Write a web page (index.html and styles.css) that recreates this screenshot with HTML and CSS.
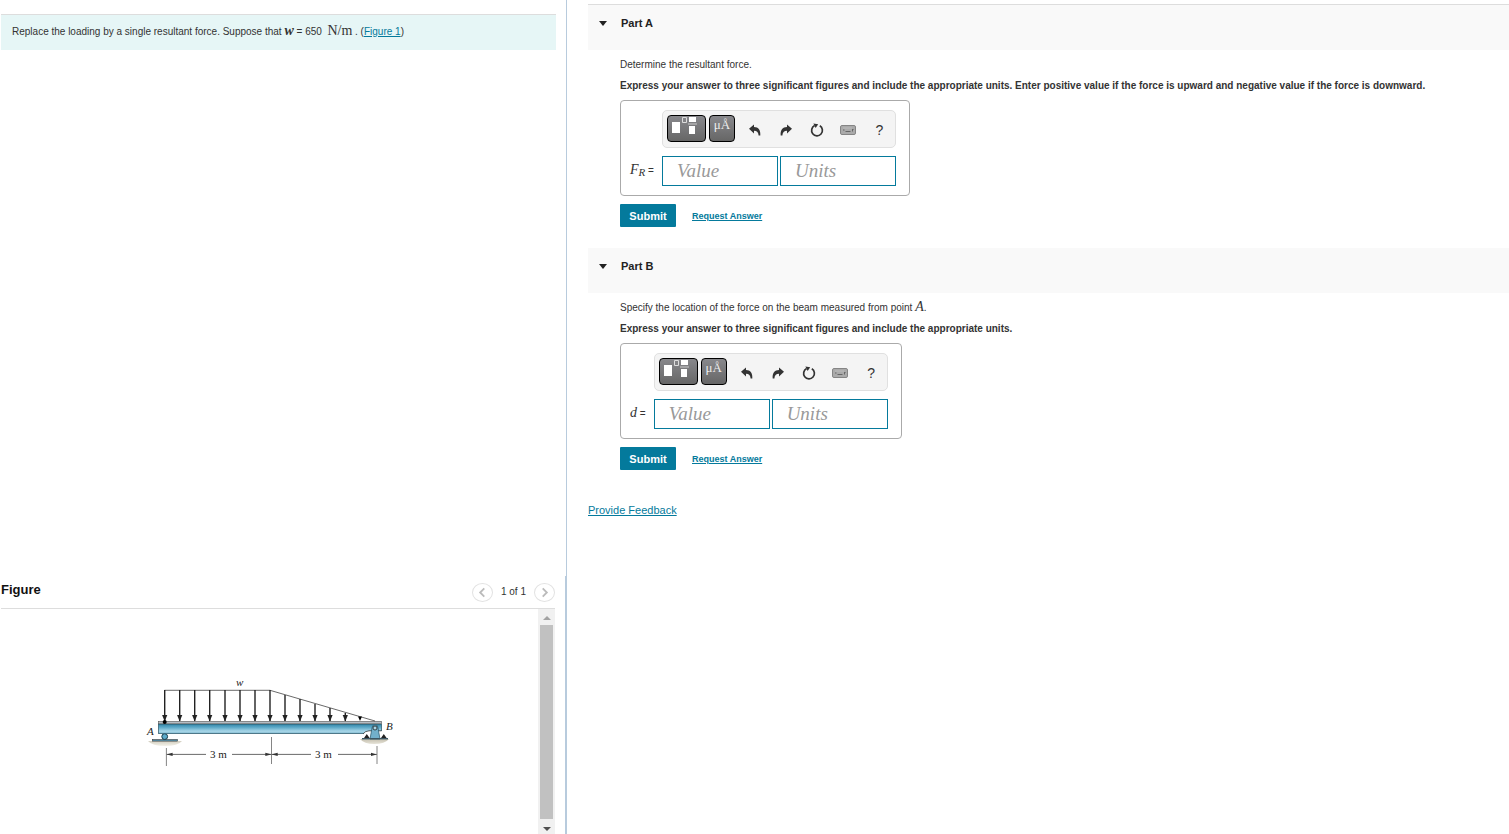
FILE: index.html
```html
<!DOCTYPE html>
<html lang="en">
<head>
    <meta charset="UTF-8">
    <meta name="viewport" content="width=device-width, initial-scale=1.0">
    <title>Resultant Force</title>
    <link rel="stylesheet" href="styles.css">
</head>
<body>
    <!-- shared toolbar icons -->
    <svg class="sprite" aria-hidden="true">
        <symbol id="icon-undo" viewBox="0 0 12 12">
            <path d="M0 4.8 L5 0.4 V3 C9.5 3 11.8 6 11.3 11.6 H9.6 C9.5 8.4 8 6.8 5 6.8 V9.4 Z"/>
        </symbol>
        <symbol id="icon-redo" viewBox="0 0 12 12">
            <path d="M12 4.8 L7 0.4 V3 C2.5 3 0.2 6 0.7 11.6 H2.4 C2.5 8.4 4 6.8 7 6.8 V9.4 Z"/>
        </symbol>
        <symbol id="icon-reset" viewBox="0 0 14 14">
            <path d="M9.8 2.8 A5.4 5.4 0 1 1 4.6 2.6" fill="none" stroke="#333" stroke-width="1.7"/>
            <path d="M3.4 0.4 L8.2 1.2 L5.6 5 Z"/>
        </symbol>
        <symbol id="icon-keyboard" viewBox="0 0 16 10">
            <rect x="0.5" y="0.5" width="15" height="9" rx="1.5" fill="#aaa" stroke="#858585"/>
            <path d="M3 5 H4.5 M5.5 6.5 H10.5 M12 4.5 H13.5 M12.5 4 V6.5" fill="none" stroke="#666"/>
            <path d="M3 3 H12" stroke="#bbb"/>
        </symbol>
        <symbol id="icon-template" viewBox="0 0 36 24">
            <path d="M4 5 H12 V16 H4 Z M21 0 H28 V5 H21 Z M21 9 H27 V17 H21 Z" fill="#fff"/>
            <path d="M20 7 H29" stroke="#ccc" stroke-width="1"/>
            <path d="M14.5 0.5 H18.5 V5.5 H14.5 Z" fill="none" stroke="#ddd"/>
        </symbol>
    </svg>

    <div class="page">
        <aside class="left">
            <div class="problem">
                Replace the loading by a single resultant force. Suppose that <i class="math bold">w</i> = 650 &nbsp;<span class="math">N/m</span> . (<a href="#figure">Figure 1</a>)
            </div>

            <section class="figure" id="figure">
                <div class="figure-header">
                    <h2>Figure</h2>
                    <div class="pager">
                        <button type="button" aria-label="Previous figure"><svg viewBox="0 0 8 12"><path d="M6.5 1.5 L2 6 L6.5 10.5"/></svg></button>
                        <span>1 of 1</span>
                        <button type="button" aria-label="Next figure"><svg viewBox="0 0 8 12"><path d="M1.5 1.5 L6 6 L1.5 10.5"/></svg></button>
                    </div>
                </div>
                <div class="viewer">
                    <div class="drawing">
                        <svg class="beam" viewBox="0 0 260 105" role="img" aria-label="Beam AB with distributed load w">
                            <defs>
                                <linearGradient id="steel" x1="0" y1="0" x2="0" y2="1">
                                    <stop offset="0" stop-color="#2f84a8"/>
                                    <stop offset="0.35" stop-color="#5da9c8"/>
                                    <stop offset="0.75" stop-color="#a9d7e8"/>
                                    <stop offset="1" stop-color="#7fb9d0"/>
                                </linearGradient>
                                <linearGradient id="ground" x1="0" y1="0" x2="0" y2="1">
                                    <stop offset="0" stop-color="#c4bfae"/>
                                    <stop offset="1" stop-color="#f4f2ea"/>
                                </linearGradient>
                                <marker id="load" viewBox="0 0 6 7" refX="3" refY="6.5" markerWidth="6" markerHeight="7" markerUnits="userSpaceOnUse">
                                    <path d="M0.4 0.5 H5.6 L3 7 Z" fill="#222"/>
                                </marker>
                                <marker id="dim" viewBox="0 0 6 4" refX="6" refY="2" markerWidth="6" markerHeight="4" markerUnits="userSpaceOnUse" orient="auto">
                                    <path d="M0 0.4 L6 2 L0 3.6 Z" fill="#333"/>
                                </marker>
                            </defs>
                            <path d="M8 71 H42 Q38 76 25 76 Q12 76 8 71 Z M220 69 H249 Q245 74 234 74 Q224 74 220 69 Z" fill="url(#ground)"/>
                            <rect x="12.5" y="69.5" width="25" height="1.6" fill="#5a93ad" stroke="#222" stroke-width="0.5"/>
                            <circle cx="24.7" cy="66.6" r="2.9" fill="#5da9c8" stroke="#173845"/>
                            <rect x="18.5" y="54" width="223" height="9.6" fill="url(#steel)" stroke="#245063" stroke-width="0.7"/>
                            <rect x="18.5" y="51.4" width="223" height="2.4" fill="#b5bdc4" stroke="#555" stroke-width="0.6"/>
                            <path d="M223 64.2 Q225 61 229 61 H242 V64.2 Z" fill="#fff"/>
                            <path d="M223 64 Q225 61 229 60.8 H241.5" fill="none" stroke="#222" stroke-width="0.7"/>
                            <path d="M230 69 L232 58 Q232 54.8 235 54.8 Q238 54.8 238 58 L240 69 Z" fill="#72b0cb" stroke="#245063" stroke-width="0.7"/>
                            <circle cx="235" cy="58" r="2" fill="#a9d7e8" stroke="#222" stroke-width="0.8"/>
                            <path d="M222 68.7 H248" stroke="#3c5663" stroke-width="1.4"/>
                            <path d="M224 68 L226.8 64 L229.6 68 Z M241 68 L243.8 64 L246.6 68 Z" fill="#222"/>
                            <path d="M24.5 20.3 H130 L235 51" fill="none" stroke="#444" stroke-width="0.8"/>
                            <g stroke="#222" stroke-width="1.4">
                                <path d="M24.7 20 V51" marker-end="url(#load)"/>
                                <path d="M39.7 20 V51" marker-end="url(#load)"/>
                                <path d="M54.7 20 V51" marker-end="url(#load)"/>
                                <path d="M69.7 20 V51" marker-end="url(#load)"/>
                                <path d="M85 20 V51" marker-end="url(#load)"/>
                                <path d="M100 20 V51" marker-end="url(#load)"/>
                                <path d="M115 20 V51" marker-end="url(#load)"/>
                                <path d="M130 20 V51" marker-end="url(#load)"/>
                                <path d="M145 25 V51" marker-end="url(#load)"/>
                                <path d="M160 29 V51" marker-end="url(#load)"/>
                                <path d="M175 34 V51" marker-end="url(#load)"/>
                                <path d="M190 38 V51" marker-end="url(#load)"/>
                                <path d="M205.3 43 V51" marker-end="url(#load)"/>
                            </g>
                            <path d="M218 46.5 H222 L220 51 Z"/>
                            <circle cx="24.7" cy="52" r="2"/>
                            <path d="M26.4 78 V96 M131.5 67 V94 M237 76 V94" stroke="#666" stroke-width="0.8"/>
                            <g stroke="#444" stroke-width="0.8">
                                <path d="M66 84.4 H26.6" marker-end="url(#dim)"/>
                                <path d="M92 84.4 H131.3" marker-end="url(#dim)"/>
                                <path d="M171 84.4 H131.7" marker-end="url(#dim)"/>
                                <path d="M198 84.4 H236.8" marker-end="url(#dim)"/>
                            </g>
                            <g class="labels">
                                <text class="italic" x="96" y="16">w</text>
                                <text class="italic" x="7" y="65">A</text>
                                <text class="italic" x="246" y="60">B</text>
                                <text x="70" y="88">3 m</text>
                                <text x="175" y="88">3 m</text>
                            </g>
                        </svg>
                    </div>
                    <div class="scrollbar">
                        <span class="arrow up"></span>
                        <span class="thumb"></span>
                        <span class="arrow down"></span>
                    </div>
                </div>
            </section>
        </aside>

        <main class="right">
            <section class="part">
                <header class="part-header">
                    <span class="caret"></span>
                    <h2>Part A</h2>
                </header>
                <form class="part-body">
                    <p>Determine the resultant force.</p>
                    <p class="bold">Express your answer to three significant figures and include the appropriate units. Enter positive value if the force is upward and negative value if the force is downward.</p>
                    <div class="answer">
                        <div class="toolbar">
                            <button type="button" class="dark wide" aria-label="Templates"><svg><use href="#icon-template"/></svg></button>
                            <button type="button" class="dark">μÅ</button>
                            <button type="button" class="tool" aria-label="Undo"><svg class="arrow-icon"><use href="#icon-undo"/></svg></button>
                            <button type="button" class="tool" aria-label="Redo"><svg class="arrow-icon"><use href="#icon-redo"/></svg></button>
                            <button type="button" class="tool" aria-label="Reset"><svg class="reset-icon"><use href="#icon-reset"/></svg></button>
                            <button type="button" class="tool" aria-label="Keyboard shortcuts"><svg class="keyboard-icon"><use href="#icon-keyboard"/></svg></button>
                            <button type="button" class="tool">?</button>
                        </div>
                        <label for="forceValue"><i class="math">F<sub>R</sub></i> =</label>
                        <div class="fields">
                            <input type="text" id="forceValue" placeholder="Value">
                            <input type="text" id="forceUnits" placeholder="Units" aria-label="Force units">
                        </div>
                    </div>
                    <div class="actions">
                        <button type="submit" class="submit">Submit</button>
                        <a href="#">Request Answer</a>
                    </div>
                </form>
            </section>

            <section class="part">
                <header class="part-header">
                    <span class="caret"></span>
                    <h2>Part B</h2>
                </header>
                <form class="part-body">
                    <p>Specify the location of the force on the beam measured from point <i class="math">A</i>.</p>
                    <p class="bold">Express your answer to three significant figures and include the appropriate units.</p>
                    <div class="answer">
                        <div class="toolbar">
                            <button type="button" class="dark wide" aria-label="Templates"><svg><use href="#icon-template"/></svg></button>
                            <button type="button" class="dark">μÅ</button>
                            <button type="button" class="tool" aria-label="Undo"><svg class="arrow-icon"><use href="#icon-undo"/></svg></button>
                            <button type="button" class="tool" aria-label="Redo"><svg class="arrow-icon"><use href="#icon-redo"/></svg></button>
                            <button type="button" class="tool" aria-label="Reset"><svg class="reset-icon"><use href="#icon-reset"/></svg></button>
                            <button type="button" class="tool" aria-label="Keyboard shortcuts"><svg class="keyboard-icon"><use href="#icon-keyboard"/></svg></button>
                            <button type="button" class="tool">?</button>
                        </div>
                        <label for="distanceValue"><i class="math">d</i> =</label>
                        <div class="fields">
                            <input type="text" id="distanceValue" placeholder="Value">
                            <input type="text" id="distanceUnits" placeholder="Units" aria-label="Distance units">
                        </div>
                    </div>
                    <div class="actions">
                        <button type="submit" class="submit">Submit</button>
                        <a href="#">Request Answer</a>
                    </div>
                </form>
            </section>

            <a class="feedback" href="#">Provide Feedback</a>
        </main>
    </div>
</body>
</html>
```
FILE: styles.css
```css
* {
    box-sizing: border-box;
}
body {
    margin: 0;
    font-family: "Liberation Sans", Arial, sans-serif;
    font-size: 10px;
    line-height: 16px;
    color: #333;
    background-color: white;
}
h2, p {
    margin: 0;
}
a {
    color: #047a9c;
    text-underline-offset: 1px;
}
button {
    padding: 0;
    font-family: inherit;
    cursor: pointer;
}
.sprite {
    position: absolute;
    width: 0;
    height: 0;
}
.bold {
    font-weight: bold;
}
.math {
    font-family: "Liberation Serif", "Times New Roman", serif;
    font-size: 14px;
    line-height: 1;
}
.page {
    display: grid;
    grid-template-columns: 567fr 942fr;
    min-height: 100vh;
}

/* left column */
.left {
    display: flex;
    flex-direction: column;
    justify-content: space-between;
    padding: 14px 0 0 1px;
    border-right: 1px solid #b8cbdd;
}
.problem {
    margin-right: 10px;
    padding: 9px 11px 10px;
    border-top: 1px solid #ddd;
    background-color: #e6f6f6;
}
.figure {
    padding-right: 10px;
    border-right: 1px solid #b8cbdd;
}
.figure-header {
    display: flex;
    justify-content: space-between;
    align-items: center;
    height: 33px;
    border-bottom: 1px solid #ddd;
}
.figure-header h2 {
    padding-bottom: 4px;
    font-size: 13px;
    color: #111;
}
.pager {
    display: flex;
    align-items: center;
    gap: 8px;
}
.pager button {
    display: flex;
    align-items: center;
    justify-content: center;
    width: 21px;
    height: 19px;
    border: 1px solid #e2e2e2;
    border-radius: 50%;
    background-color: white;
}
.pager svg {
    width: 8px;
    height: 11px;
    fill: none;
    stroke: #bbb;
    stroke-width: 2;
}
.viewer {
    display: flex;
    height: 225px;
}
.drawing {
    flex: 1;
    padding-top: 61px;
    text-align: center;
}
.beam {
    width: 260px;
    height: 105px;
}
.labels {
    font-family: "Liberation Serif", "Times New Roman", serif;
    font-size: 11px;
    fill: #222;
}
.italic {
    font-style: italic;
}
.scrollbar {
    display: flex;
    flex-direction: column;
    align-items: center;
    gap: 5px;
    width: 17px;
    padding: 7px 0 3px;
    background-color: #f1f1f1;
}
.thumb {
    flex: 1;
    width: 13px;
    margin-bottom: 3px;
    background-color: #c1c1c1;
}
.arrow {
    border: 4px solid transparent;
}
.up {
    border-top: 0;
    border-bottom-color: #a3a3a3;
}
.down {
    border-bottom: 0;
    border-top-color: #505050;
}

/* right column */
.right {
    padding: 4px 0 0 21px;
}
.part-header {
    display: flex;
    align-items: center;
    gap: 14px;
    height: 45px;
    padding: 0 0 9px 11px;
    background-color: #f9f9f9;
}
.part:first-child .part-header {
    height: 46px;
    border-top: 1px solid #ddd;
}
.part-header h2 {
    font-size: 11px;
    color: #222;
}
.caret {
    border: 4px solid transparent;
    border-top: 5px solid #222;
    border-bottom: 0;
}
.part-body {
    padding: 7px 0 21px 32px;
}
.part-body p {
    margin-bottom: 5px;
}
.answer {
    display: inline-grid;
    grid-template-columns: auto 234px;
    gap: 8px;
    align-items: center;
    padding: 9px 13px 9px 9px;
    margin-top: 1px;
    vertical-align: top;
    border: 1px solid #aaa;
    border-radius: 4px;
}
.toolbar {
    grid-column: 2;
    display: flex;
    align-items: center;
    height: 38px;
    padding-left: 4px;
    border: 1px solid #e0e0e0;
    border-radius: 5px;
    background-color: #f4f4f4;
}
.toolbar button {
    flex-shrink: 0;
}
.dark {
    width: 26px;
    height: 27px;
    margin: 0 3px 1px 0;
    border: 1px solid #000;
    border-radius: 4px;
    background: linear-gradient(#88888c, #666);
    color: #eee;
    font: 13px/1 "Liberation Serif", serif;
    padding-bottom: 8px;
}
.wide {
    width: 39px;
    padding: 0;
}
.wide svg {
    display: block;
    width: 36px;
    height: 24px;
}
.tool {
    display: flex;
    align-items: center;
    justify-content: center;
    width: 31px;
    height: 31px;
    padding: 1px 0 0 4px;
    border: 0;
    background: none;
    font-size: 14px;
    color: #333;
    fill: #333;
}
.arrow-icon {
    width: 12px;
    height: 12px;
}
.reset-icon {
    width: 14px;
    height: 14px;
}
.keyboard-icon {
    width: 16px;
    height: 10px;
}
.answer sub {
    font-size: 11px;
    line-height: 1;
    vertical-align: -2px;
}
.fields {
    display: grid;
    grid-template-columns: 1fr 1fr;
    gap: 2px;
}
.fields input {
    width: 100%;
    height: 30px;
    padding: 0 14px;
    border: 1px solid #047a9c;
    font: italic 19px "Liberation Serif", serif;
}
.fields input::placeholder {
    color: #999;
}
.actions {
    display: flex;
    align-items: center;
    gap: 16px;
    margin-top: 8px;
}
.actions a {
    font-size: 9px;
    font-weight: bold;
}
.submit {
    width: 56px;
    height: 23px;
    border: 0;
    border-radius: 1px;
    background-color: #047a9c;
    color: white;
    font-size: 11px;
    font-weight: bold;
}
.feedback {
    display: inline-block;
    margin-top: 11px;
    font-size: 11px;
}
```
